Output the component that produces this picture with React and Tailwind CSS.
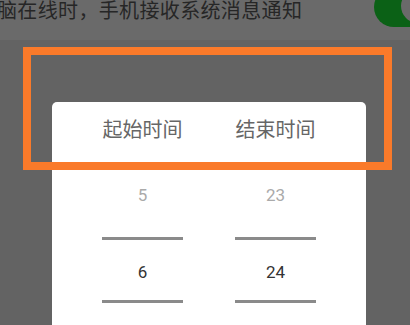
export default function App() {
  const cols = [
    { title: '起始时间', prev: '5', cur: '6' },
    { title: '结束时间', prev: '23', cur: '24' },
  ]

  return (
    <div className="relative w-[410px] h-[325px] overflow-hidden bg-[#636363] font-['Roboto','Noto_Sans_CJK_SC',sans-serif]">

      {/* ===== TOP ROW (dimmed) ===== */}
      <div className="flex items-start justify-between h-[40px] bg-[#6a6a6a] overflow-hidden">
        <div className="-ml-[3px] mt-[-1px] text-[20px] leading-[22px] tracking-[0.35px] text-[#262626] whitespace-nowrap font-['Noto_Sans_CJK_SC',sans-serif]">
          脑在线时，手机接收系统消息通知
        </div>
        <div className="relative shrink-0 w-[64px] h-[40px] mt-[-13px] mr-[-28px] rounded-full bg-[#0b6116]">
          <div className="absolute left-[27px] top-[2px] w-[34px] h-[34px] rounded-full bg-[#6a6a6a]" />
        </div>
      </div>

      {/* ===== PICKER CARD ===== */}
      <div className="ml-[52px] mt-[62px] w-[314px] h-[240px] bg-white rounded-t-[5px] flex pl-[50px] gap-[52px]">
        {cols.map(c => (
          <div key={c.title} className="w-[81px] flex flex-col items-center pt-[13px]">
            <div className="h-[28px] leading-[28px] text-[20px] text-[#666] whitespace-nowrap font-['Noto_Sans_CJK_SC',sans-serif]">
              {c.title}
            </div>
            <div className="mt-[40px] h-[24px] leading-[24px] text-[17px] text-[#aaa]">{c.prev}</div>
            <div className="mt-[30px] w-full h-[3px] bg-[#8a8a8a]" />
            <div className="mt-[20px] h-[24px] leading-[24px] text-[17px] text-[#333]">{c.cur}</div>
            <div className="mt-[16px] w-full h-[3px] bg-[#8a8a8a]" />
          </div>
        ))}
      </div>

      {/* ===== ANNOTATION BOX ===== */}
      <div className="absolute left-[23px] top-[47px] w-[369px] h-[123px] border-[8px] border-[#fa7a2a]" />
    </div>
  )
}
